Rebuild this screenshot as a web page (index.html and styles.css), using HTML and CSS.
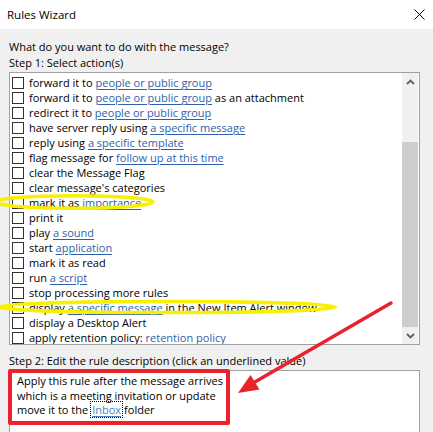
FILE: index.html
```html
<!DOCTYPE html>
<html>
<head>
<meta charset="utf-8">
<title>Rules Wizard</title>
<link rel="stylesheet" href="styles.css">
</head>
<body>
<div class="window">
  <div class="titlebar">
    <span class="title">Rules Wizard</span>
    <svg class="close" width="11" height="11" viewBox="0 0 11 11"><path d="M0.5 0.5 L10.5 10.5 M10.5 0.5 L0.5 10.5" stroke="#000" stroke-width="1" fill="none"/></svg>
  </div>
  <div class="content">
    <div class="label">What do you want to do with the message?</div>
    <div class="label">Step 1: Select action(s)</div>
    <div class="listbox">
      <ul class="rows">
        <li class="row"><span class="cb"></span>forward it to&nbsp;<a class="lnk">people or public group</a></li>
        <li class="row"><span class="cb"></span>forward it to&nbsp;<a class="lnk">people or public group</a>&nbsp;as an attachment</li>
        <li class="row"><span class="cb"></span>redirect it to&nbsp;<a class="lnk">people or public group</a></li>
        <li class="row"><span class="cb"></span>have server reply using&nbsp;<a class="lnk">a specific message</a></li>
        <li class="row"><span class="cb"></span>reply using&nbsp;<a class="lnk">a specific template</a></li>
        <li class="row"><span class="cb"></span>flag message for&nbsp;<a class="lnk">follow up at this time</a></li>
        <li class="row"><span class="cb"></span>clear the Message Flag</li>
        <li class="row"><span class="cb"></span>clear message's categories</li>
        <li class="row"><span class="cb"></span>mark it as&nbsp;<a class="lnk">importance</a></li>
        <li class="row"><span class="cb"></span>print it</li>
        <li class="row"><span class="cb"></span>play&nbsp;<a class="lnk">a sound</a></li>
        <li class="row"><span class="cb"></span>start&nbsp;<a class="lnk">application</a></li>
        <li class="row"><span class="cb"></span>mark it as read</li>
        <li class="row"><span class="cb"></span>run&nbsp;<a class="lnk">a script</a></li>
        <li class="row"><span class="cb"></span>stop processing more rules</li>
        <li class="row"><span class="cb"></span>display&nbsp;<a class="lnk">a specific message</a>&nbsp;in the New Item Alert window</li>
        <li class="row"><span class="cb"></span>display a Desktop Alert</li>
        <li class="row"><span class="cb"></span>apply retention policy:&nbsp;<a class="lnk">retention policy</a></li>
      </ul>
      <div class="scrollbar">
        <div class="arrow"><svg width="9" height="6" viewBox="0 0 9 6"><path d="M1 5 L4.5 1.5 L8 5" stroke="#606060" stroke-width="1.8" fill="none"/></svg></div>
        <div class="track"><div class="thumb"></div></div>
        <div class="arrow"><svg width="9" height="6" viewBox="0 0 9 6"><path d="M1 1 L4.5 4.5 L8 1" stroke="#606060" stroke-width="1.8" fill="none"/></svg></div>
      </div>
    </div>
    <div class="label step2">Step 2: Edit the rule description (click an underlined value)</div>
    <div class="desc">
      <div>Apply this rule after the message arrives</div>
      <div>which is a meeting invitation or update</div>
      <div>move it to the<span class="focus"><a class="lnk light">Inbox</a></span>folder</div>
    </div>
  </div>
  <svg class="annot" width="433" height="432" viewBox="0 0 433 432">
    <ellipse cx="74" cy="202" rx="79" ry="6.3" fill="none" stroke="#f8f000" stroke-width="3.5"/>
    <ellipse cx="167" cy="307" rx="168.5" ry="5.6" fill="none" stroke="#f8f000" stroke-width="3.5"/>
    <line x1="391" y1="303" x2="254" y2="382.5" stroke="#e8232b" stroke-width="3.5" stroke-linecap="round"/>
    <polygon points="238,393 250.5,375 259.5,389.5" fill="#e8232b"/>
  </svg>
  <div class="redbox"></div>
</div>
</body>
</html>
```

FILE: styles.css
```css
html, body {
  margin: 0;
  padding: 0;
}
body {
  width: 433px;
  height: 432px;
  overflow: hidden;
  background: #f0f0f0;
  font-family: "Open Sans", "Liberation Sans", sans-serif;
  font-size: 11px;
  color: #000;
}
.window {
  position: relative;
  height: 432px;
  overflow: hidden;
}
.titlebar {
  height: 29px;
  background: #fff;
  display: flex;
  align-items: center;
  justify-content: space-between;
  padding: 0 8px 0 7px;
}
.title {
  font-size: 11.5px;
}
.close {
  display: block;
  margin-top: -1px;
}
.content {
  padding: 10px 13px 0 9px;
}
.label {
  height: 16px;
  line-height: 16px;
  white-space: nowrap;
}
.listbox {
  margin-top: 1px;
  height: 273px;
  box-sizing: border-box;
  border: 1px solid #a0a0a0;
  background: #fff;
  display: flex;
  overflow: hidden;
}
.rows {
  flex: 1;
  list-style: none;
  margin: 0;
  padding: 2px 0 0 2px;
  overflow: hidden;
}
.row {
  height: 15px;
  display: flex;
  align-items: center;
  white-space: nowrap;
}
.cb {
  width: 12px;
  height: 12px;
  box-sizing: border-box;
  border: 1px solid #333;
  background: #fff;
  margin-right: 5px;
  flex: none;
}
.lnk {
  color: #2d62ab;
  text-decoration: underline;
  text-underline-offset: 2px;
}
.lnk.light {
  color: #4a84c6;
}
.scrollbar {
  width: 16px;
  margin-right: 1px;
  background: #f0f0f0;
  display: flex;
  flex-direction: column;
}
.arrow {
  height: 17px;
  display: flex;
  align-items: center;
  justify-content: center;
  flex: none;
}
.track {
  flex: 1;
  display: flex;
  flex-direction: column;
  padding-top: 52px;
}
.thumb {
  height: 185px;
  background: #cdcdcd;
}
.step2 {
  margin-top: 8px;
}
.desc {
  margin-top: 1px;
  height: 90px;
  box-sizing: border-box;
  border: 1px solid #a0a0a0;
  background: #fff;
  padding: 3px 7px;
  line-height: 14.5px;
  white-space: nowrap;
}
.focus {
  outline: 1px dotted #000;
  outline-offset: 0;
  padding: 0 1px;
  margin: 0 2px 0 3px;
}
.annot {
  position: absolute;
  left: 0;
  top: 0;
  pointer-events: none;
}
.redbox {
  position: absolute;
  left: 8px;
  top: 369px;
  width: 222px;
  height: 56px;
  box-sizing: border-box;
  border: 4px solid #e8232b;
  border-radius: 2px;
}
```
